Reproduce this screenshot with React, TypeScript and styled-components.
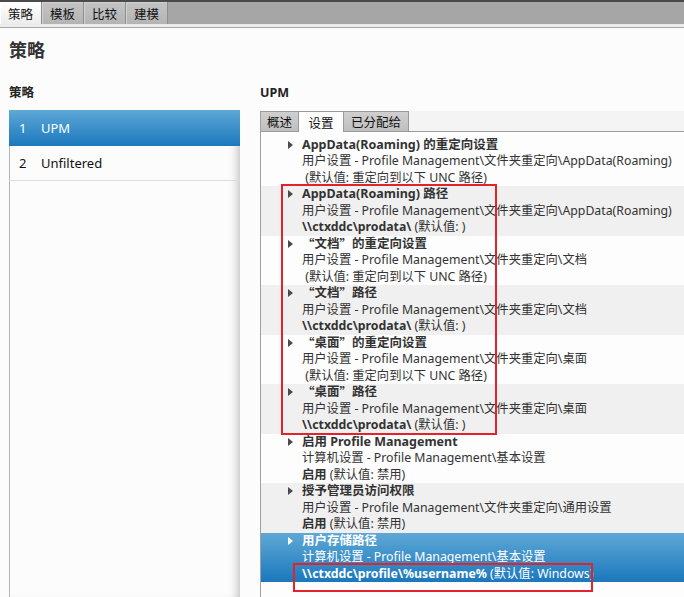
import styled, { createGlobalStyle } from "styled-components";

const GlobalStyle = createGlobalStyle`
	html, body {
		margin: 0;
		padding: 0;
		background: #fcfcfc;
	}
	body {
		font-family: "Noto Sans", "Noto Sans CJK SC", sans-serif;
		color: #333;
	}
`;

interface Setting {
	title: string;
	path: string;
	value?: string;
	def: string;
	selected?: boolean;
}

const userRedirect = "用户设置 - Profile Management\\文件夹重定向\\";

const settings: Setting[] = [
	{ title: "AppData(Roaming) 的重定向设置", path: userRedirect + "AppData(Roaming)", def: " (默认值: 重定向到以下 UNC 路径)" },
	{ title: "AppData(Roaming) 路径", path: userRedirect + "AppData(Roaming)", value: "\\\\ctxddc\\prodata\\", def: " (默认值: )" },
	{ title: "“文档”的重定向设置", path: userRedirect + "文档", def: " (默认值: 重定向到以下 UNC 路径)" },
	{ title: "“文档”路径", path: userRedirect + "文档", value: "\\\\ctxddc\\prodata\\", def: " (默认值: )" },
	{ title: "“桌面”的重定向设置", path: userRedirect + "桌面", def: " (默认值: 重定向到以下 UNC 路径)" },
	{ title: "“桌面”路径", path: userRedirect + "桌面", value: "\\\\ctxddc\\prodata\\", def: " (默认值: )" },
	{ title: "启用 Profile Management", path: "计算机设置 - Profile Management\\基本设置", value: "启用", def: " (默认值: 禁用)" },
	{ title: "授予管理员访问权限", path: userRedirect + "通用设置", value: "启用", def: " (默认值: 禁用)" },
	{ title: "用户存储路径", path: "计算机设置 - Profile Management\\基本设置", value: "\\\\ctxddc\\profile\\%username%", def: " (默认值: Windows)", selected: true },
];

// full-width quotes come from the CJK font
const withQuotes = (text: string) =>
	text.split(/([“”])/).map((part, i) =>
		part === "“" || part === "”" ? <Quote key={i}>{part}</Quote> : part
	);

export default function App() {
	return (
		<>
			<GlobalStyle />
			<Page>
				<TopBar>
					<TopTab active>策略</TopTab>
					<TopTab>模板</TopTab>
					<TopTab>比较</TopTab>
					<TopTab>建模</TopTab>
				</TopBar>
				<Title>策略</Title>
				<Columns>
					<Column>
						<Label>策略</Label>
						<PolicyList>
							<PolicyItem selected>
								<Num>1</Num>UPM
							</PolicyItem>
							<PolicyItem bordered>
								<Num>2</Num>Unfiltered
							</PolicyItem>
						</PolicyList>
					</Column>
					<Column>
						<Label>UPM</Label>
						<Panel>
							<SubTabs>
								<SubTab width={38}>概述</SubTab>
								<SubTab width={45} active>设置</SubTab>
								<SubTab width={65}>已分配给</SubTab>
							</SubTabs>
							<Rows>
								{settings.map((s, i) => (
									<Row key={i} alt={i % 2 === 1} selected={s.selected}>
										<Arrow selected={s.selected} />
										<RowText>
											<RowTitle>{withQuotes(s.title)}</RowTitle>
											<Line>{s.path}</Line>
											<Line>
												{s.value && <b>{s.value}</b>}
												{s.def}
											</Line>
										</RowText>
									</Row>
								))}
								<Mark style={{ left: 20, top: 52, width: 212, height: 247 }} />
								<Mark style={{ left: 32, top: 431, width: 296, height: 25 }} />
							</Rows>
						</Panel>
					</Column>
				</Columns>
			</Page>
		</>
	);
}

const Page = styled.div`
	width: 684px;
	height: 597px;
	display: flex;
	flex-direction: column;
	overflow: hidden;
`;

const TopBar = styled.div`
	display: flex;
	height: 22px;
	background: #a6a6a6;
	border-top: 2px solid #4a4a4a;
	border-bottom: 3px solid #ececec;
	box-shadow: 0 1px 0 #a8a8a8;
	flex-shrink: 0;
`;

const TopTab = styled.div<{ active?: boolean }>`
	width: 41px;
	display: flex;
	align-items: center;
	justify-content: center;
	font-size: 12.5px;
	color: #111;
	border-right: 1px solid #8e8e8e;
	background: ${({ active }) =>
		active ? "linear-gradient(#ffffff, #ececec)" : "linear-gradient(#c4c4c4, #b4b4b4)"};
	box-shadow: inset 1px 1px 0 ${({ active }) => (active ? "#fff" : "#d2d2d2")};
`;

const Title = styled.div`
	font-size: 18px;
	font-weight: bold;
	color: #333;
	line-height: 24px;
	padding: 11px 0 0 9px;
	flex-shrink: 0;
`;

const Columns = styled.div`
	flex: 1;
	display: grid;
	grid-template-columns: 231px 1fr;
	column-gap: 20px;
	padding: 22px 0 0 9px;
	min-height: 0;
`;

const Column = styled.div`
	display: flex;
	flex-direction: column;
	min-height: 0;
`;

const Label = styled.div`
	font-size: 12.5px;
	font-weight: bold;
	color: #222;
	line-height: 18px;
	height: 18px;
	margin-bottom: 8px;
`;

const PolicyList = styled.div`
	flex: 1;
	border-left: 1px solid #b4b4b4;
	box-shadow: inset -9px 0 8px -6px rgba(0, 0, 0, 0.22);
`;

const PolicyItem = styled.div<{ selected?: boolean; bordered?: boolean }>`
	display: flex;
	align-items: center;
	height: ${({ bordered }) => (bordered ? "34px" : "36px")};
	padding-left: 10px;
	font-size: 13px;
	color: ${({ selected }) => (selected ? "#fff" : "#111")};
	background: ${({ selected }) =>
		selected ? "linear-gradient(#5ea8d6, #1b78bd)" : "transparent"};
	border-bottom: ${({ bordered }) => (bordered ? "1px solid #dcdcdc" : "none")};
	margin-left: -1px;
`;

const Num = styled.span`
	width: 22px;
`;

const Panel = styled.div`
	flex: 1;
	display: flex;
	flex-direction: column;
	border-left: 1px solid #a0a0a0;
	margin-top: 1px;
	min-height: 0;
`;

const SubTabs = styled.div`
	display: flex;
	height: 20px;
	background: #f4f4f4;
	border-bottom: 1px solid #9a9a9a;
	flex-shrink: 0;
`;

const SubTab = styled.div<{ active?: boolean; width: number }>`
	width: ${({ width }) => width}px;
	box-sizing: border-box;
	display: flex;
	align-items: center;
	justify-content: center;
	font-size: 12.5px;
	color: #111;
	border: 1px solid #9a9a9a;
	border-left: none;
	border-bottom: none;
	background: ${({ active }) => (active ? "#fdfdfd" : "linear-gradient(#cfcfcf, #c0c0c0)")};
	margin-bottom: ${({ active }) => (active ? "-1px" : "0")};
`;

const Rows = styled.div`
	position: relative;
	flex: 1;
	padding-top: 4.5px;
	background: #fdfdfd;
`;

const Row = styled.div<{ alt?: boolean; selected?: boolean }>`
	display: flex;
	align-items: flex-start;
	height: 49.5px;
	padding-left: 27px;
	background: ${({ alt, selected }) =>
		selected ? "linear-gradient(#5ea8d6, #1b78bd)" : alt ? "#f0f0f0" : "transparent"};
	color: ${({ selected }) => (selected ? "#fff" : "#333")};
`;

const Arrow = styled.div<{ selected?: boolean }>`
	width: 0;
	height: 0;
	margin-top: 4px;
	margin-right: 9px;
	border-left: 5px solid ${({ selected }) => (selected ? "#fff" : "#4a4a4a")};
	border-top: 4.5px solid transparent;
	border-bottom: 4.5px solid transparent;
`;

const RowText = styled.div`
	font-size: 12.3px;
	line-height: 16.5px;
	white-space: pre;
`;

const RowTitle = styled.div`
	font-weight: bold;
	font-size: 12.5px;
	height: 16.5px;
`;

const Quote = styled.span`
	font-family: "Noto Sans CJK SC", sans-serif;
	display: inline-block;
	line-height: 16.5px;
	height: 16.5px;
	vertical-align: top;
`;

const Line = styled.div`
	& b {
		font-weight: bold;
	}
`;

const Mark = styled.div`
	position: absolute;
	border: 2px solid #e3222b;
	pointer-events: none;
`;
